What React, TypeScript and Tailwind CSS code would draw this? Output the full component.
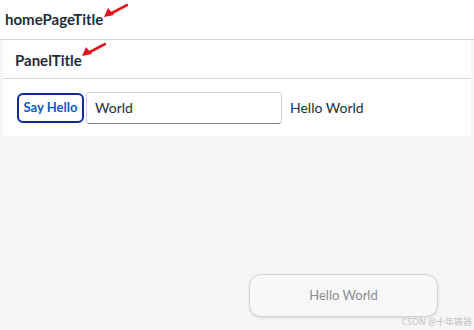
const RedArrow = () => (
  <svg width="24" height="16" viewBox="0 0 24 16" className="shrink-0">
    <path d="M23 1 L6 10" stroke="#e0141e" strokeWidth="2.6" strokeLinecap="round" />
    <path d="M0 13 L4 4 L10 11 Z" fill="#e0141e" />
  </svg>
);

export default function App() {
  return (
    <div
      className="relative w-[474px] h-[330px] overflow-hidden bg-[#f5f6f7] text-[#1d2d3e]"
      style={{ fontFamily: 'Lato, "Noto Sans", Arial, sans-serif' }}
    >
      {/* Page header */}
      <div className="flex h-[40px] items-start border-b border-[#d9d9d9] bg-white pl-[5px] pt-[8px]">
        <span className="text-[15px] font-bold leading-[22px]">homePageTitle</span>
        <span className="-mt-[4px] ml-[1px]">
          <RedArrow />
        </span>
      </div>

      {/* Panel */}
      <div className="mx-[3px] bg-white">
        <div className="flex h-[39px] items-start border-b border-[#d9d9d9] pl-[12px] pt-[9px]">
          <span className="text-[15px] font-bold leading-[22px]">PanelTitle</span>
          <span className="-mt-[6px]">
            <RedArrow />
          </span>
        </div>
        <div className="flex h-[57px] items-center gap-[2px] pl-[14px]">
          <button className="h-[30px] w-[67px] rounded-[6px] border-2 border-[#0b2c91] text-[13px] font-bold text-[#0a5bc4]">
            Say Hello
          </button>
          <div className="flex h-[32px] w-[196px] items-center rounded-[4px] border border-[#cfd3d8] border-b-[#7d8690] bg-white px-[8px] text-[14px]">
            World
          </div>
          <span className="ml-[6px] text-[14px]">Hello World</span>
        </div>
      </div>

      {/* Toast */}
      <div className="absolute left-[249px] top-[274px] flex h-[43px] w-[189px] items-center justify-center rounded-[12px] border border-[#d4d4d8] bg-[#f8f8fa] text-[13px] text-[#8c8c8c] shadow-sm">
        Hello World
      </div>

      <div
        className="absolute bottom-[2px] right-[2px] text-[9px] text-[#c3c3c3]"
        style={{ fontFamily: '"Noto Sans", "Noto Sans CJK SC", sans-serif' }}
      >
        CSDN @十年铸器
      </div>
    </div>
  );
}
